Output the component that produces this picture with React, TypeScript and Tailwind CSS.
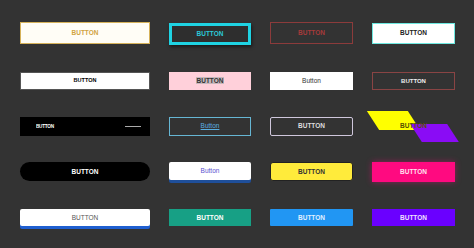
import React from "react";

const font = "font-['Liberation_Sans',Arial,sans-serif]";

export default function App() {
  return (
    <div className={`w-[474px] h-[248px] bg-[#333333] overflow-hidden ${font}`}>
      <div className="grid grid-cols-[130px_82px_83px_83px] grid-rows-[repeat(5,46px)] gap-x-[19px] pl-[20px] pt-[10px] items-center">
        {/* row 1 */}
        <button className="h-[22px] bg-[#fffdf6] border border-[#d6b25a] text-[#d2a43f] text-[6.5px] font-bold">BUTTON</button>
        <button className="h-[22px] border-[3px] border-[#1fd3e3] bg-[#2e2e2e] text-[#2bc8d8] text-[6.5px] font-bold shadow-[1px_2px_3px_rgba(0,0,0,0.5)] mt-[1px]">BUTTON</button>
        <button className="h-[22px] border border-[#8c3b3b] text-[#a63a3a] text-[6.5px] font-bold">BUTTON</button>
        <button className="h-[21px] bg-white border-[1.5px] border-[#6ee8e0] text-[#222] text-[6.5px] font-bold">BUTTON</button>

        {/* row 2 */}
        <button className="h-[18px] bg-white border border-[#555] text-black text-[5.5px] font-bold mt-[3px]">BUTTON</button>
        <button className="h-[18px] bg-[#ffd0da] text-[#333] text-[6.5px] font-bold mt-[3px]">
          <span className="bg-[#c8b8bc] px-[1px]">BUTTON</span>
        </button>
        <button className="h-[18px] bg-white text-[#333] text-[6.5px] mt-[4px]">Button</button>
        <button className="h-[18px] border border-[#8a4444] text-[#eee] text-[6px] font-bold mt-[4px]">BUTTON</button>

        {/* row 3 */}
        <button className="relative h-[19px] bg-black text-white text-[5.5px] font-bold tracking-[-0.3px] flex items-center pl-[16px] mt-[2px]">
          <span className="scale-x-[0.85] origin-left">BUTTON</span>
          <span className="absolute right-[9px] top-[9px] w-[16px] h-px bg-[#aaa]"></span>
        </button>
        <button className="h-[19px] border border-[#66b6d4] text-[#5aaee0] text-[6.5px] underline mt-[2px]">Button</button>
        <button className="h-[19px] border-[1.5px] border-[#cfc7dc] rounded-[2px] text-[#ddd] text-[6.5px] font-bold mt-[2px]">BUTTON</button>
        <div className="relative h-[40px]">
          <div className="absolute left-[1px] top-[6px] w-[41px] h-[19px] bg-[#ffff00] skew-x-[33deg]"></div>
          <div className="absolute left-[44px] top-[19px] w-[37px] h-[18px] bg-[#8a0cf5] skew-x-[33deg]"></div>
          <span className="absolute left-[28px] top-[16px] text-[6.5px] font-bold text-[#555000]">BUTTON</span>
        </div>

        {/* row 4 */}
        <button className="h-[19px] bg-black rounded-full text-white text-[6.5px] font-bold mt-[1px]">BUTTON</button>
        <button className="h-[18px] bg-white rounded-[2px] text-[#5a4fd0] text-[6.5px] shadow-[0_3px_0_#1f4f9a] mt-[0px]">Button</button>
        <button className="h-[19px] bg-[#ffeb3b] border border-[#222] rounded-[3px] text-[#333] text-[6.5px] font-bold mt-[1px]">BUTTON</button>
        <button className="h-[20px] bg-[#ff0a80] text-[#ffe0ee] text-[6.5px] font-bold shadow-[0_0_6px_rgba(255,10,128,0.45)] mt-[1px]">BUTTON</button>

        {/* row 5 */}
        <button className="h-[17px] bg-white rounded-[2px] text-[#555] text-[6.5px] shadow-[0_3px_0_#1f5fd0] mt-[1px]">BUTTON</button>
        <button className="h-[17px] bg-[#17a085] text-white text-[6.5px] font-bold mt-[1px]">BUTTON</button>
        <button className="h-[17px] bg-[#2196f3] rounded-[1px] text-[#e0f0ff] text-[6.5px] font-bold mt-[1px]">BUTTON</button>
        <button className="h-[17px] bg-[#6a00ff] text-[#f0e0ff] text-[6.5px] font-bold mt-[1px]">BUTTON</button>
      </div>
    </div>
  );
}
